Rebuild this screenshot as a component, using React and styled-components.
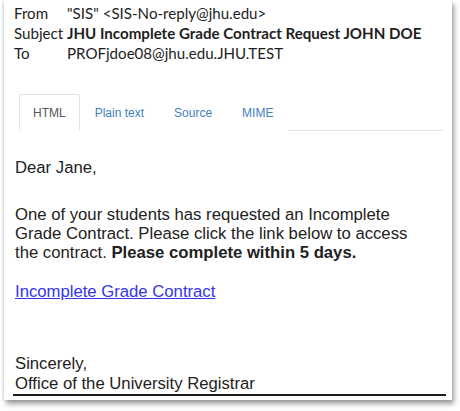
import React from "react";
import styled, { createGlobalStyle } from "styled-components";

const Global = createGlobalStyle`
  html, body { margin: 0; padding: 0; background: #fff; }
  body { width: 460px; height: 411px; overflow: hidden; }
`;

const Card = styled.div`
  margin-left: 4px;
  width: 448px;
  height: 400px;
  box-sizing: border-box;
  background: #fff;
  box-shadow: 2px 4px 5px rgba(0, 0, 0, 0.38), -1px 0 3px rgba(0, 0, 0, 0.12);
  display: flex;
  flex-direction: column;
`;

const Header = styled.div`
  display: grid;
  grid-template-columns: 53px 1fr;
  padding: 3px 0 0 10px;
  font-family: Lato, "Open Sans", sans-serif;
  font-size: 15.1px;
  line-height: 20px;
  color: #1e1e1e;
`;

const Label = styled.span``;
const Value = styled.span`
  font-weight: ${(p) => (p.$bold ? 700 : 400)};
  white-space: nowrap;
`;

const Tabs = styled.div`
  display: flex;
  margin: 31px 9px 0 15px;
  border-bottom: 1px solid #e3e3e3;
  font-family: "Liberation Sans", Arial, sans-serif;
  font-size: 12px;
`;

const Tab = styled.div`
  height: 35px;
  display: flex;
  align-items: center;
  padding: 0 ${(p) => (p.$active ? 13 : 14)}px;
  margin-bottom: -1px;
  color: ${(p) => (p.$active ? "#555" : "#3f7fc2")};
  border: 1px solid ${(p) => (p.$active ? "#e3e3e3" : "transparent")};
  border-bottom: 1px solid ${(p) => (p.$active ? "#fff" : "transparent")};
  border-radius: 3px 3px 0 0;
  background: #fff;
`;

const Body = styled.div`
  padding: 27px 0 0 11px;
  font-family: "Liberation Sans", Arial, sans-serif;
  font-size: 16.7px;
  line-height: 19px;
  color: #222;
`;

const P = styled.p`
  margin: 0 0 ${(p) => p.$after || 0}px 0;
`;

const Link = styled.a`
  color: #3434ee;
  text-decoration: underline;
`;

const Signature = styled.div`
  margin: 0 6px 0 -2px;
  padding-left: 2px;
  padding-bottom: 1px;
  border-bottom: 2px solid #1c1c1c;
`;

export default function App() {
  return (
    <>
      <Global />
      <Card>
        <Header>
          <Label>From</Label>
          <Value>"SIS" &lt;SIS-No-reply@jhu.edu&gt;</Value>
          <Label>Subject</Label>
          <Value $bold>JHU Incomplete Grade Contract Request JOHN DOE</Value>
          <Label>To</Label>
          <Value>PROFjdoe08@jhu.edu.JHU.TEST</Value>
        </Header>
        <Tabs>
          <Tab $active>HTML</Tab>
          <Tab>Plain text</Tab>
          <Tab>Source</Tab>
          <Tab>MIME</Tab>
        </Tabs>
        <Body>
          <P $after={28}>Dear Jane,</P>
          <P $after={20}>
            One of your students has requested an Incomplete
            <br />
            Grade Contract. Please click the link below to access
            <br />
            the contract. <b>Please complete within 5 days.</b>
          </P>
          <P $after={53}>
            <Link href="#">Incomplete Grade Contract</Link>
          </P>
          <Signature>
            <P $after={1}>Sincerely,</P>
            <P>Office of the University Registrar</P>
          </Signature>
        </Body>
      </Card>
    </>
  );
}
